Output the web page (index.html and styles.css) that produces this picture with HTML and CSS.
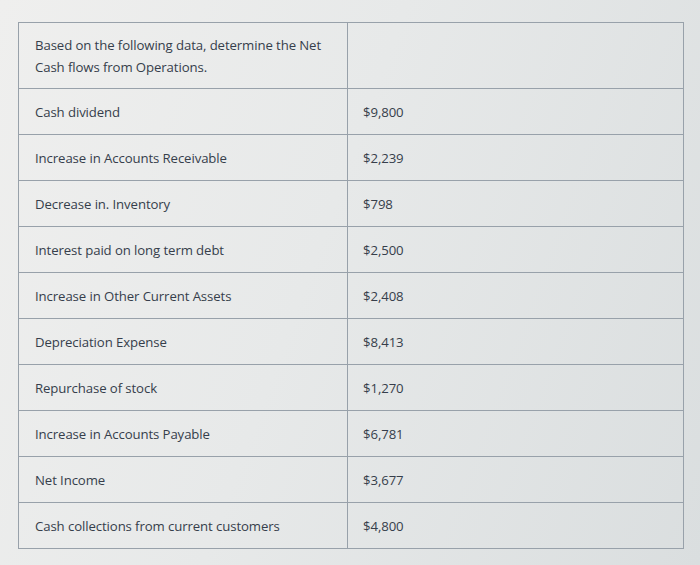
FILE: index.html
```html
<!DOCTYPE html>
<html lang="en">
<head>
  <meta charset="UTF-8" />
  <title>Cash flows from Operations</title>
  <link rel="stylesheet" href="styles.css">
</head>
<body>
  <div class="sheet">
    <table class="data">
      <tr class="head">
        <td>Based on the following data, determine the Net<br>Cash flows from Operations.</td>
        <td></td>
      </tr>
      <tr><td>Cash dividend</td><td>$9,800</td></tr>
      <tr><td>Increase in Accounts Receivable</td><td>$2,239</td></tr>
      <tr><td>Decrease in. Inventory</td><td>$798</td></tr>
      <tr><td>Interest paid on long term debt</td><td>$2,500</td></tr>
      <tr><td>Increase in Other Current Assets</td><td>$2,408</td></tr>
      <tr><td>Depreciation Expense</td><td>$8,413</td></tr>
      <tr><td>Repurchase of stock</td><td>$1,270</td></tr>
      <tr><td>Increase in Accounts Payable</td><td>$6,781</td></tr>
      <tr><td>Net Income</td><td>$3,677</td></tr>
      <tr><td>Cash collections from current customers</td><td>$4,800</td></tr>
    </table>
  </div>
</body>
</html>
```

FILE: styles.css
```css
html, body {
  margin: 0;
  padding: 0;
}
body {
  font-family: 'Open Sans', sans-serif;
  background: linear-gradient(110deg, #efefee 0%, #e7e9e9 45%, #dadedf 100%);
  width: 700px;
  height: 565px;
  overflow: hidden;
}
.sheet {
  padding: 22px 0 0 18px;
}
.data {
  border-collapse: collapse;
  width: 666px;
  color: #363e4b;
  font-size: 13.2px;
  font-weight: 500;
  letter-spacing: -0.1px;
}
.data td {
  border: 1px solid #98a1aa;
  height: 45px;
  padding: 0 0 0 16px;
  vertical-align: middle;
}
.data td:first-child {
  width: 312px;
}
.data td:last-child {
  padding-left: 15px;
}
.head td {
  height: 65px;
  line-height: 22px;
}
```
